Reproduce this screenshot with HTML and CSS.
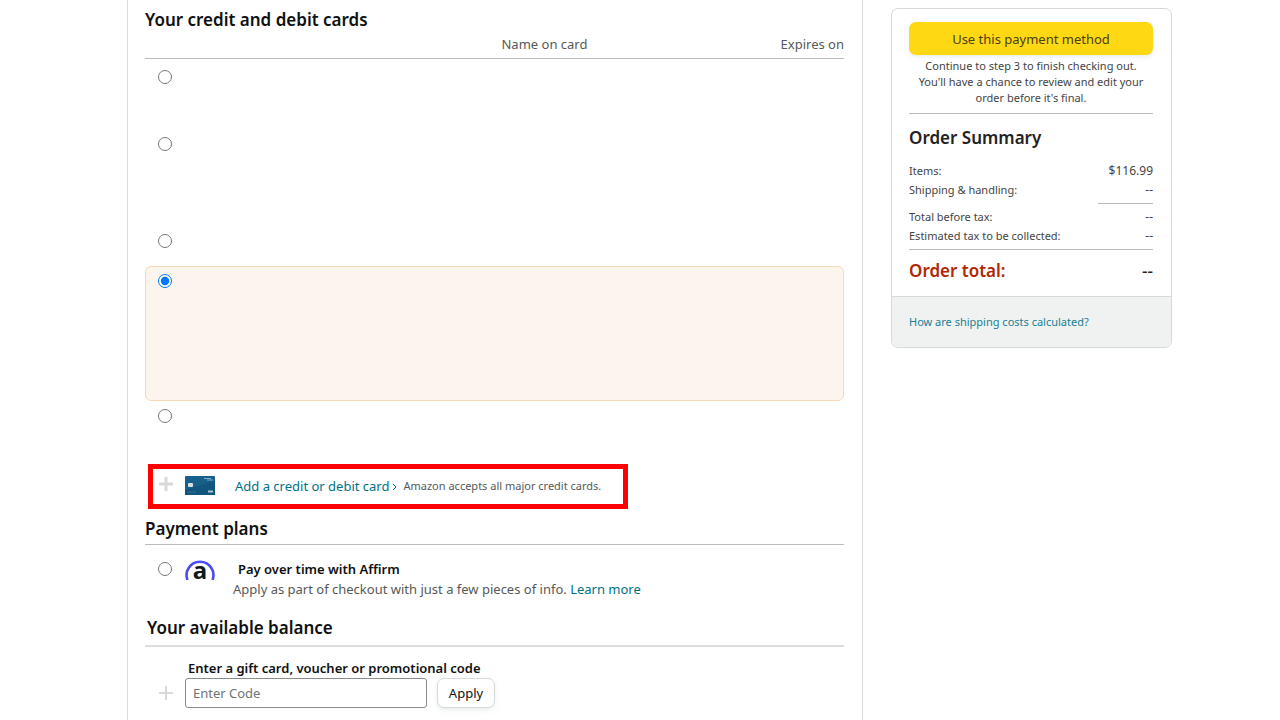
FILE: index.html
```html
<!DOCTYPE html>
<html lang="en">
<head>
  <meta charset="UTF-8" />
  <meta name="viewport" content="width=device-width, initial-scale=1.0" />
  <title>Select a payment method</title>
  <link rel="stylesheet" href="styles.css">
</head>
<body>
  <div class="page">
    <main class="payment-panel">
      <section class="cards">
        <h2>Your credit and debit cards</h2>
        <div class="card-head">
          <span class="name-col">Name on card</span>
          <span>Expires on</span>
        </div>
        <div class="card-list">
          <div class="card-row medium"><input type="radio" name="payment" aria-label="Card 1"></div>
          <div class="card-row tall"><input type="radio" name="payment" aria-label="Card 2"></div>
          <div class="card-row short"><input type="radio" name="payment" aria-label="Card 3"></div>
          <div class="card-row selected"><input type="radio" name="payment" aria-label="Card 4" checked></div>
          <div class="card-row last"><input type="radio" name="payment" aria-label="Card 5"></div>
        </div>
        <div class="add-card">
          <svg class="plus" viewBox="0 0 16 16"><path d="M8 1v14M1 8h14" stroke="#d9d9d9" stroke-width="3"/></svg>
          <svg class="card-icon" viewBox="0 0 30 20">
            <rect width="30" height="19" rx="1" fill="#17608a"/>
            <path d="M0 19V14L30 5v14z" fill="#12557d"/>
            <rect x="3" y="7" width="5" height="4" rx="1" fill="#d5dde0"/>
            <path d="M19 2.500h7M22 4h6" stroke="#7fa9c0"/>
            <path d="M3 16h8" stroke="#397391"/>
            <path d="M23 15.500h5" stroke="#a9c5d3" stroke-width="2"/>
          </svg>
          <div class="add-text">
            <a href="#">Add a credit or debit card<svg class="arrow" viewBox="0 0 5 8"><path d="M1 1l3 3-3 3" fill="none" stroke="#007185"/></svg></a>
            <span class="note">Amazon accepts all major credit cards.</span>
          </div>
        </div>
      </section>

      <section class="plans">
        <h2>Payment plans</h2>
        <div class="plan-row">
          <input type="radio" name="payment" id="affirm">
          <svg class="affirm-icon" viewBox="0 0 30 22">
            <path d="M2.500 22A13.400 13.400 0 1 1 27.500 22" fill="none" stroke="#4a4af4" stroke-width="2.600"/>
            <text class="affirm-letter" x="15" y="21" text-anchor="middle">a</text>
          </svg>
          <div class="plan-text">
            <label for="affirm">Pay over time with Affirm</label>
            <p>Apply as part of checkout with just a few pieces of info. <a href="#">Learn more</a></p>
          </div>
        </div>
      </section>

      <section class="balance">
        <h2>Your available balance</h2>
        <form class="gift-form">
          <label for="code">Enter a gift card, voucher or promotional code</label>
          <div class="gift-row">
            <svg class="plus" viewBox="0 0 16 16"><path d="M8 1v14M1 8h14" stroke="#d9d9d9" stroke-width="2"/></svg>
            <input type="text" id="code" placeholder="Enter Code">
            <button type="button" class="apply">Apply</button>
          </div>
        </form>
      </section>
    </main>

    <aside class="summary">
      <div class="summary-body">
        <button type="button" class="use-button">Use this payment method</button>
        <p class="hint">Continue to step 3 to finish checking out. You'll have a chance to review and edit your order before it's final.</p>
        <h2>Order Summary</h2>
        <table>
          <tr><td>Items:</td><td class="amount">$116.99</td></tr>
          <tr class="ruled"><td>Shipping &amp; handling:</td><td class="amount">--</td></tr>
          <tr class="after-rule"><td>Total before tax:</td><td class="amount">--</td></tr>
          <tr><td>Estimated tax to be collected:</td><td class="amount">--</td></tr>
        </table>
        <div class="total"><span class="total-label">Order total:</span><span class="total-value">--</span></div>
      </div>
      <div class="summary-foot"><a href="#">How are shipping costs calculated?</a></div>
    </aside>
  </div>
</body>
</html>
```
FILE: styles.css
```css
* {
  box-sizing: border-box;
}

body {
  margin: 0;
  font-family: "Noto Sans", sans-serif;
  font-size: 13px;
  line-height: 20px;
  color: #0f1111;
  background-color: #fff;
}

h2, p {
  margin: 0;
}

h2 {
  font-size: 17px;
  font-weight: 600;
  line-height: 24px;
}

a {
  color: #007185;
  text-decoration: none;
}

a:hover {
  text-decoration: underline;
}

svg {
  display: block;
  flex: none;
}

input[type="radio"] {
  width: 14px;
  height: 14px;
  margin: 0;
  flex: none;
}

.page {
  display: flex;
  align-items: flex-start;
  gap: 28px;
  padding: 0 108px 0 127px;
}

.payment-panel {
  flex: 1;
  min-height: 100vh;
  padding: 8px 18px 12px 17px;
  border: 1px solid #ddd;
  border-width: 0 1px;
}

/* saved cards */
.card-head {
  display: flex;
  justify-content: space-between;
  padding: 2px 0 4px;
  border-bottom: 1px solid #bbb;
  color: #565959;
}

.name-col {
  margin-left: 51%;
}

.card-list {
  padding-top: 3px;
}

.card-row {
  padding: 8px 13px;
}

.card-row.medium {
  min-height: 67px;
}

.card-row.tall {
  min-height: 97px;
}

.card-row.short {
  min-height: 40px;
}

.card-row.selected {
  min-height: 135px;
  padding: 7px 12px;
  background: #fcf5ee;
  border: 1px solid #fbd8b4;
  border-radius: 6px;
}

.card-row.last {
  min-height: 63px;
}

.card-row input {
  display: block;
}

.add-card {
  display: flex;
  align-items: center;
  width: 480px;
  height: 45px;
  margin-left: 3px;
  padding: 0 0 2px 5px;
  border: 5px solid #f00;
}

.plus {
  width: 16px;
  height: 16px;
}

.add-card .plus {
  margin-bottom: 4px;
}

.card-icon {
  width: 30px;
  height: 20px;
  margin-left: 11px;
}

.add-text {
  display: flex;
  align-items: center;
  margin-left: 20px;
}

.add-text a {
  display: flex;
  align-items: center;
}

.arrow {
  width: 5px;
  height: 8px;
  margin: 3px 0 0 3px;
}

.note {
  margin-left: 6px;
  font-size: 11px;
  color: #565959;
}

/* payment plans */
.plans h2 {
  padding: 8px 0 3px;
  border-bottom: 1px solid #bbb;
}

.plan-row {
  display: flex;
  padding: 13px 13px 0;
}

.plan-row input {
  margin-top: 4px;
}

.affirm-icon {
  width: 30px;
  height: 22px;
  margin-left: 13px;
}

.affirm-letter {
  font-size: 24px;
  font-weight: 700;
  fill: #101820;
}

.plan-text {
  margin-left: 18px;
  padding-top: 1px;
  color: #565959;
}

.plan-text label {
  display: block;
  padding-left: 5px;
  font-weight: 600;
  color: #0f1111;
}

/* gift card balance */
.balance h2 {
  padding: 17px 2px 5px;
  border-bottom: 2px solid #ddd;
}

.gift-form {
  padding: 11px 13px 0;
}

.gift-form label {
  display: block;
  padding-left: 30px;
  font-weight: 600;
}

.gift-row {
  display: flex;
  align-items: center;
}

.gift-row input {
  width: 242px;
  height: 30px;
  margin-left: 11px;
  padding: 0 7px;
  border: 1px solid #888c8c;
  border-radius: 3px;
  font: inherit;
}

.gift-row input::placeholder {
  color: #6f7373;
}

.apply {
  width: 58px;
  height: 30px;
  margin-left: 10px;
  padding: 0;
  background: #fff;
  border: 1px solid #d5d9d9;
  border-radius: 7px;
  box-shadow: 0 2px 4px rgba(213, 217, 217, 0.5);
  font: inherit;
  color: #0f1111;
}

/* order summary */
.summary {
  width: 281px;
  margin: 8px 0 0;
  border: 1px solid #d5d9d9;
  border-radius: 7px;
  overflow: hidden;
  font-size: 11px;
  color: #444;
}

.summary-body {
  padding: 13px 18px 13px 17px;
}

.use-button {
  width: 100%;
  height: 33px;
  background: #ffd814;
  border: 0;
  border-radius: 7px;
  box-shadow: 0 2px 4px rgba(213, 217, 217, 0.5);
  font: inherit;
  font-size: 13px;
  color: #4a4112;
}

.hint {
  padding: 3px 6px 7px;
  border-bottom: 1px solid #bbb;
  line-height: 16px;
  text-align: center;
}

.summary h2 {
  padding: 12px 0 11px;
  color: #222;
}

table {
  width: 100%;
  margin-bottom: 4px;
  border-collapse: collapse;
}

td {
  padding: 0;
  line-height: 19px;
}

.amount {
  width: 55px;
  font-size: 12px;
  text-align: right;
}

.ruled .amount {
  border-bottom: 1px solid #bbb;
}

.ruled td {
  padding-bottom: 4px;
}

.after-rule td {
  padding-top: 3px;
}

.total {
  display: flex;
  justify-content: space-between;
  padding-top: 9px;
  border-top: 1px solid #bbb;
  font-size: 17px;
  font-weight: 600;
  line-height: 24px;
  color: #222;
}

.total-label {
  color: #b12704;
}

.total-value {
  font-weight: 500;
}

.summary-foot {
  padding: 15px 17px;
  background: #f0f2f2;
  border-top: 1px solid #d5d9d9;
}

.summary-foot a {
  color: #1a8093;
}
```
